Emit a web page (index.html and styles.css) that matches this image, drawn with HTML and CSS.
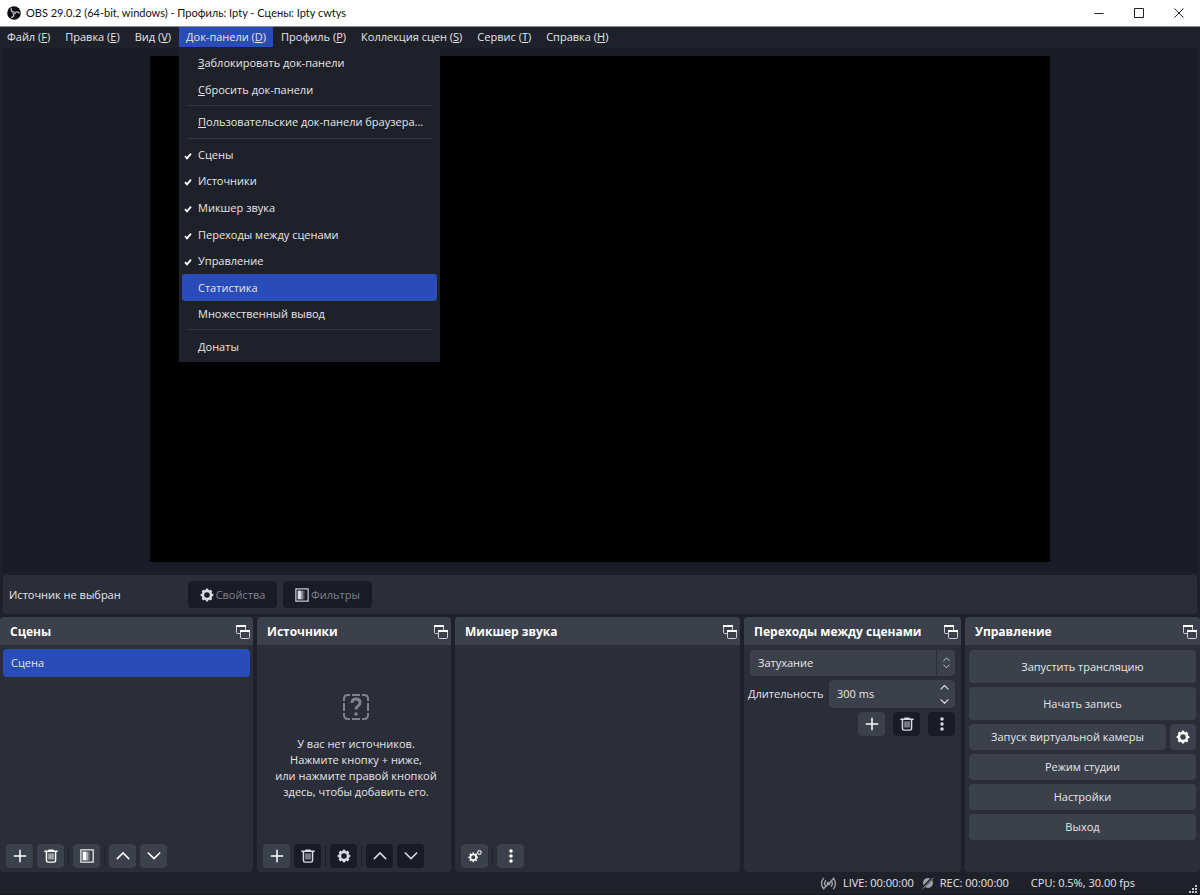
FILE: index.html
```html
<!DOCTYPE html>
<html lang="ru">
<head>
  <meta charset="UTF-8">
  <meta name="viewport" content="width=device-width, initial-scale=1.0">
  <title>OBS 29.0.2</title>
  <link rel="stylesheet" href="styles.css">
</head>
<body>

  <!-- icons -->
  <svg class="sprite" aria-hidden="true">
    <symbol id="i-plus" viewBox="0 0 16 16"><path d="M8 1.500v13M1.500 8h13" fill="none" stroke="currentColor" stroke-width="1.7" stroke-linecap="round"/></symbol>
    <symbol id="i-trash" viewBox="0 0 16 16">
      <path d="M1 2.500h14M5.500 1.300h5M2.800 3V13q0 2 2 2h6.400q2 0 2-2V3" fill="none" stroke="currentColor" stroke-width="1.700" stroke-linecap="round"/>
      <path d="M5.800 5v7M8 5v7M10.200 5v7" stroke="currentColor" stroke-width="1.100"/>
    </symbol>
    <symbol id="i-filter" viewBox="0 0 16 16">
      <rect x="1" y="1" width="14" height="14" fill="none" stroke="currentColor" stroke-width="1.3"/>
      <path d="M3 3h4v10H3z" fill="currentColor"/>
      <path d="M7 3h2v10H7z" fill="currentColor" opacity=".65"/>
      <path d="M9 3h2v10H9z" fill="currentColor" opacity=".3"/>
    </symbol>
    <symbol id="i-up" viewBox="0 0 16 16"><path d="M1.500 11L8 4.500l6.500 6.500" fill="none" stroke="currentColor" stroke-width="1.8" stroke-linecap="round"/></symbol>
    <symbol id="i-down" viewBox="0 0 16 16"><path d="M1.500 4.500L8 11l6.500-6.500" fill="none" stroke="currentColor" stroke-width="1.8" stroke-linecap="round"/></symbol>
    <symbol id="i-gear" viewBox="0 0 16 16">
      <circle cx="8" cy="8" r="4.7" fill="none" stroke="currentColor" stroke-width="3"/>
      <circle cx="8" cy="8" r="6" fill="none" stroke="currentColor" stroke-width="2.6" pathLength="16" stroke-dasharray="1.1 .9" stroke-dashoffset=".55"/>
    </symbol>
    <symbol id="i-gears" viewBox="0 0 16 16">
      <circle cx="6" cy="9.5" r="3.3" fill="none" stroke="currentColor" stroke-width="1.9"/>
      <circle cx="6" cy="9.5" r="4.6" fill="none" stroke="currentColor" stroke-width="1.8" pathLength="16" stroke-dasharray="1 1" stroke-dashoffset=".5"/>
      <circle cx="13" cy="4" r="1.9" fill="none" stroke="currentColor" stroke-width="1.1"/>
      <circle cx="13" cy="4" r="2.6" fill="none" stroke="currentColor" stroke-width="1" pathLength="16" stroke-dasharray="1 1" stroke-dashoffset=".5"/>
    </symbol>
    <symbol id="i-dots" viewBox="0 0 16 16"><path d="M8 2.2h.01M8 8h.01M8 13.8h.01" stroke="currentColor" stroke-width="4" stroke-linecap="round"/></symbol>
    <symbol id="i-float" viewBox="0 0 14 14">
      <path d="M4 8.500H1.500Q.5 8.500.5 7.500V1h9v4" fill="none" stroke="currentColor" opacity=".75"/>
      <path d="M0 0h10v2H0zM4 5h10v2H4z" fill="currentColor"/>
      <path d="M4.500 6h9v6.500q0 1-1 1h-7q-1 0-1-1z" fill="none" stroke="currentColor" opacity=".75"/>
    </symbol>
    <symbol id="i-check" viewBox="0 0 8 8"><path d="M1 4.200L3 6.300 7 1.700" fill="none" stroke="currentColor" stroke-width="1.8"/></symbol>
  </svg>

  <header class="titlebar">
    <svg class="logo" viewBox="0 0 16 16" aria-hidden="true">
      <circle cx="8" cy="8" r="7.800" fill="#0b0b0d"/>
      <g fill="none" stroke="#b9b9bc" stroke-width="1.600" stroke-linecap="round">
        <path id="blade" d="M5 3C4.200 5.500 5.800 7.300 8.200 6.800"/>
        <use href="#blade" transform="rotate(120 8 8)"/>
        <use href="#blade" transform="rotate(240 8 8)"/>
      </g>
    </svg>
    <h1 class="window-title">OBS 29.0.2 (64-bit, windows) - Профиль: Ipty - Сцены: Ipty cwtys</h1>
    <div class="window-buttons">
      <button aria-label="Свернуть"><svg viewBox="0 0 10 10"><path d="M.5 5.500h9"/></svg></button>
      <button aria-label="Развернуть"><svg viewBox="0 0 10 10"><path d="M.5.5h9v9h-9z"/></svg></button>
      <button aria-label="Закрыть"><svg viewBox="0 0 10 10"><path d="M.5.5l9 9M9.500.5l-9 9"/></svg></button>
    </div>
  </header>

  <nav>
    <ul class="menubar">
      <li><button>Файл (<u>F</u>)</button></li>
      <li><button>Правка (<u>E</u>)</button></li>
      <li><button>Вид (<u>V</u>)</button></li>
      <li class="open">
        <button>Док-панели (<u>D</u>)</button>
        <div class="dropdown" role="menu">
          <button role="menuitem"><span><u>З</u>аблокировать док-панели</span></button>
          <button role="menuitem"><span><u>С</u>бросить док-панели</span></button>
          <hr>
          <button role="menuitem"><span><u>П</u>ользовательские док-панели браузера...</span></button>
          <hr>
          <button role="menuitemcheckbox" aria-checked="true"><svg><use href="#i-check"/></svg>Сцены</button>
          <button role="menuitemcheckbox" aria-checked="true"><svg><use href="#i-check"/></svg>Источники</button>
          <button role="menuitemcheckbox" aria-checked="true"><svg><use href="#i-check"/></svg>Микшер звука</button>
          <button role="menuitemcheckbox" aria-checked="true"><svg><use href="#i-check"/></svg>Переходы между сценами</button>
          <button role="menuitemcheckbox" aria-checked="true"><svg><use href="#i-check"/></svg>Управление</button>
          <button role="menuitemcheckbox" aria-checked="false" class="active">Статистика</button>
          <button role="menuitem">Множественный вывод</button>
          <hr>
          <button role="menuitem">Донаты</button>
        </div>
      </li>
      <li><button>Профиль (<u>P</u>)</button></li>
      <li><button>Коллекция сцен (<u>S</u>)</button></li>
      <li><button>Сервис (<u>T</u>)</button></li>
      <li><button>Справка (<u>H</u>)</button></li>
    </ul>
  </nav>

  <main class="preview">
    <div class="canvas"></div>
  </main>

  <section class="context-bar">
    <span class="context-label">Источник не выбран</span>
    <button class="btn off" disabled><svg class="icon"><use href="#i-gear"/></svg>Свойства</button>
    <button class="btn off" disabled><svg class="icon"><use href="#i-filter"/></svg>Фильтры</button>
  </section>

  <div class="docks">
    <section class="dock">
      <header class="dock-title"><h2>Сцены</h2><button aria-label="Открепить"><svg class="icon"><use href="#i-float"/></svg></button></header>
      <ul class="scene-list">
        <li><button>Сцена</button></li>
      </ul>
      <div class="toolbar">
        <button class="tool" aria-label="Добавить"><svg class="icon"><use href="#i-plus"/></svg></button>
        <button class="tool" aria-label="Удалить"><svg class="icon"><use href="#i-trash"/></svg></button>
        <i class="sep"></i>
        <button class="tool" aria-label="Фильтры"><svg class="icon"><use href="#i-filter"/></svg></button>
        <i class="sep"></i>
        <button class="tool" aria-label="Вверх"><svg class="icon"><use href="#i-up"/></svg></button>
        <button class="tool" aria-label="Вниз"><svg class="icon"><use href="#i-down"/></svg></button>
      </div>
    </section>

    <section class="dock">
      <header class="dock-title"><h2>Источники</h2><button aria-label="Открепить"><svg class="icon"><use href="#i-float"/></svg></button></header>
      <div class="empty">
        <svg class="empty-icon" viewBox="0 0 26 26" fill="none" stroke="currentColor" stroke-width="2" aria-hidden="true">
          <path d="M1 7V5q0-4 4-4h2M19 1h2q4 0 4 4v2M25 19v2q0 4-4 4h-2M7 25H5q-4 0-4-4v-2M9 1h8M9 25h8M1 9v8M25 9v8"/>
          <path d="M9 9q0-4 4-4t4 3.500q0 2-2 3.500t-2 3.500" stroke-width="3"/>
          <circle cx="13" cy="20" r="1.800" fill="currentColor" stroke="none"/>
        </svg>
        <p>У вас нет источников.<br>Нажмите кнопку + ниже,<br>или нажмите правой кнопкой<br>здесь, чтобы добавить его.</p>
      </div>
      <div class="toolbar">
        <button class="tool" aria-label="Добавить"><svg class="icon"><use href="#i-plus"/></svg></button>
        <button class="tool off" aria-label="Удалить" disabled><svg class="icon"><use href="#i-trash"/></svg></button>
        <i class="sep"></i>
        <button class="tool off" aria-label="Свойства" disabled><svg class="icon"><use href="#i-gear"/></svg></button>
        <i class="sep"></i>
        <button class="tool off" aria-label="Вверх" disabled><svg class="icon"><use href="#i-up"/></svg></button>
        <button class="tool off" aria-label="Вниз" disabled><svg class="icon"><use href="#i-down"/></svg></button>
      </div>
    </section>

    <section class="dock">
      <header class="dock-title"><h2>Микшер звука</h2><button aria-label="Открепить"><svg class="icon"><use href="#i-float"/></svg></button></header>
      <div class="toolbar">
        <button class="tool" aria-label="Расширенные свойства звука"><svg class="icon"><use href="#i-gears"/></svg></button>
        <i class="sep"></i>
        <button class="tool" aria-label="Меню микшера"><svg class="icon"><use href="#i-dots"/></svg></button>
      </div>
    </section>

    <section class="dock">
      <header class="dock-title"><h2>Переходы между сценами</h2><button aria-label="Открепить"><svg class="icon"><use href="#i-float"/></svg></button></header>
      <div class="transitions">
        <div class="select-wrap">
          <select aria-label="Переход"><option>Затухание</option></select>
          <span class="select-arrows"><svg><use href="#i-up"/></svg><svg><use href="#i-down"/></svg></span>
        </div>
        <div class="duration">
          <label for="duration">Длительность</label>
          <div class="spin">
            <input id="duration" type="text" value="300 ms">
            <div class="spin-buttons">
              <button aria-label="Больше"><svg><use href="#i-up"/></svg></button>
              <button aria-label="Меньше"><svg><use href="#i-down"/></svg></button>
            </div>
          </div>
        </div>
        <div class="transition-tools">
          <button class="tool" aria-label="Добавить"><svg class="icon"><use href="#i-plus"/></svg></button>
          <button class="tool off" aria-label="Удалить" disabled><svg class="icon"><use href="#i-trash"/></svg></button>
          <button class="tool off" aria-label="Свойства перехода" disabled><svg class="icon"><use href="#i-dots"/></svg></button>
        </div>
      </div>
    </section>

    <section class="dock">
      <header class="dock-title"><h2>Управление</h2><button aria-label="Открепить"><svg class="icon"><use href="#i-float"/></svg></button></header>
      <div class="controls">
        <button class="btn tall">Запустить трансляцию</button>
        <button class="btn tall">Начать запись</button>
        <div class="controls-row">
          <button class="btn">Запуск виртуальной камеры</button>
          <button class="btn gear" aria-label="Настройки виртуальной камеры"><svg class="icon"><use href="#i-gear"/></svg></button>
        </div>
        <button class="btn">Режим студии</button>
        <button class="btn">Настройки</button>
        <button class="btn">Выход</button>
      </div>
    </section>
  </div>

  <footer class="statusbar">
    <span class="status">
      <svg class="live" viewBox="0 0 18 14" fill="none" stroke="currentColor" stroke-width="1.500" aria-hidden="true">
        <path d="M4 1Q-1 7 4 13M6.300 3.500Q3.500 7 6.300 10.500M14 1q5 6 0 12M11.700 3.500q2.800 3.500 0 7M3.500 13L15 1"/>
        <circle cx="9" cy="7" r="2" fill="currentColor" stroke="none"/>
      </svg>
      LIVE: 00:00:00
    </span>
    <span class="status">
      <svg class="rec" viewBox="0 0 12 12" aria-hidden="true">
        <circle cx="6" cy="6" r="5" fill="currentColor"/>
        <path d="M0 11.500L11.500 0" stroke="#1f212a" stroke-width="2.600"/>
        <path d="M.8 11.500L11.500.8" stroke="currentColor" stroke-width="1"/>
      </svg>
      REC: 00:00:00
    </span>
    <span class="status cpu">CPU: 0.5%, 30.00 fps</span>
    <svg class="grip" viewBox="0 0 9 9" aria-hidden="true"><path d="M6 0h2v2H6zM3 3h2v2H3zM6 3h2v2H6zM0 6h2v2H0zM3 6h2v2H3zM6 6h2v2H6z" fill="currentColor"/></svg>
  </footer>

</body>
</html>
```
FILE: styles.css
```css
* {
  box-sizing: border-box;
}

body {
  margin: 0;
  height: 100vh;
  display: flex;
  flex-direction: column;
  background: #1f212a;
  color: #e6e6e8;
  font: 11px/16px "Open Sans", "Noto Sans", sans-serif;
}

h1, h2, p, ul {
  margin: 0;
  padding: 0;
}

ul {
  list-style: none;
}

button, select, input {
  font: inherit;
  color: inherit;
  border: 0;
  margin: 0;
  padding: 0;
  background: none;
}

u {
  text-underline-offset: 1px;
}

.sprite {
  display: none;
}

.icon {
  width: 14px;
  height: 14px;
  flex: none;
}

/* window frame */

.titlebar {
  display: flex;
  align-items: center;
  height: 27px;
  padding: 0 1px 0 7px;
  background: #fff;
  color: #111;
  border-bottom: 1px solid #8b8c8f;
}

.logo {
  width: 14px;
  height: 14px;
  margin-right: 5px;
}

.window-title {
  flex: 1;
  font: 400 11px/16px Lato, sans-serif;
}

.window-buttons {
  display: flex;
}

.window-buttons button {
  display: flex;
  justify-content: center;
  align-items: center;
  width: 40px;
  height: 26px;
}

.window-buttons svg {
  width: 10px;
  height: 10px;
  fill: none;
  stroke: #222;
}

/* menu */

.menubar {
  display: flex;
  gap: 1px;
  height: 21px;
}

.menubar > li {
  position: relative;
}

.menubar > li > button {
  height: 20px;
  padding: 0 7px;
}

.open > button {
  background: #284cb8;
}

.dropdown {
  position: absolute;
  z-index: 10;
  top: 21px;
  left: 0;
  display: flex;
  flex-direction: column;
  min-width: 261px;
  min-height: 314px;
  padding: 2px 3px;
  background: #1f212a;
  white-space: nowrap;
}

.dropdown button {
  flex: 1;
  display: flex;
  align-items: center;
  padding: 0 8px 0 16px;
  border-radius: 3px;
}

.dropdown svg {
  width: 8px;
  height: 8px;
  margin: 2px 6px 0 -14px;
  color: #fff;
}

.dropdown .active {
  background: #284cb8;
}

.dropdown hr {
  height: 1px;
  margin: 2px 5px 3px;
  border: 0;
  background: #343743;
}

/* preview */

.preview {
  flex: 1;
  min-height: 0;
  display: flex;
  justify-content: center;
  margin: 0 3px;
  padding: 8px 0 10px;
  background: #191b26;
}

.canvas {
  height: 100%;
  aspect-ratio: 16 / 9;
  background: #000;
}

.context-bar {
  display: flex;
  align-items: center;
  gap: 6px;
  margin: 3px;
  padding: 6px;
  border-radius: 4px;
  background: #2b2d38;
}

.context-label {
  width: 173px;
}

.btn {
  display: flex;
  align-items: center;
  justify-content: center;
  gap: 2px;
  height: 26px;
  border-radius: 4px;
  background: #3c404b;
}

.context-bar .btn {
  width: 89px;
  height: 27px;
}

.btn.off {
  background: #191b26;
  color: #808289;
}

.btn.off .icon {
  color: #d8dae4;
}

/* docks */

.docks {
  display: grid;
  grid-template-columns: 253fr 194fr 285fr 217fr 235fr;
  gap: 4px;
  min-height: 255px;
}

.dock {
  display: flex;
  flex-direction: column;
  min-width: 0;
  border-radius: 4px;
  background: #2b2d38;
}

.dock-title {
  display: flex;
  align-items: center;
  justify-content: space-between;
  height: 28px;
  padding: 1px 3px 0 10px;
  border-radius: 4px 4px 0 0;
  background: #3c404b;
  color: #fff;
}

.dock-title h2 {
  font-size: 12px;
  font-weight: 700;
  white-space: nowrap;
}

.dock-title button {
  display: flex;
}

.scene-list {
  padding: 4px 3px;
}

.scene-list button {
  width: 100%;
  height: 28px;
  padding: 0 8px;
  border-radius: 4px;
  background: #284cb8;
  text-align: left;
}

.toolbar {
  display: flex;
  gap: 4px;
  margin-top: auto;
  padding: 4px 6px;
}

.tool {
  display: flex;
  align-items: center;
  justify-content: center;
  width: 27px;
  height: 24px;
  border-radius: 4px;
  background: #3c404b;
  color: #fff;
}

.tool.off {
  background: #191b26;
  color: #d8dae4;
}

.sep {
  width: 1px;
  margin: 2px 0;
  background: #1f212a;
}

.empty {
  flex: 1;
  display: flex;
  flex-direction: column;
  align-items: center;
  justify-content: center;
  gap: 16px;
  padding: 8px 0 0 4px;
  text-align: center;
  white-space: nowrap;
}

.empty-icon {
  width: 26px;
  height: 26px;
  color: #808289;
}

.transitions {
  display: flex;
  flex-direction: column;
  gap: 4px;
  padding: 5px 6px 0 4px;
}

.select-wrap {
  display: flex;
  margin-left: 2px;
  border-radius: 4px;
  background: #3c404b;
}

.select-wrap select {
  flex: 1;
  height: 26px;
  padding: 0 8px;
  appearance: none;
  border-right: 1px solid #2b2d38;
}

.select-arrows {
  display: flex;
  flex-direction: column;
  align-items: center;
  justify-content: center;
  width: 18px;
}

.select-arrows svg {
  width: 7px;
  height: 7px;
}

.duration {
  display: flex;
  align-items: center;
  justify-content: space-between;
  gap: 4px;
}

.spin {
  display: flex;
  width: 126px;
  height: 28px;
  border-radius: 4px;
  background: #3c404b;
}

.spin input {
  flex: 1;
  min-width: 0;
  padding: 0 8px;
}

.spin-buttons {
  display: flex;
  flex-direction: column;
  width: 22px;
}

.spin-buttons button {
  flex: 1;
  display: flex;
  align-items: center;
  justify-content: center;
}

.spin-buttons svg {
  width: 9px;
  height: 9px;
}

.transition-tools {
  display: flex;
  justify-content: flex-end;
  gap: 8px;
}

.controls {
  display: flex;
  flex-direction: column;
  gap: 4px;
  padding: 5px 4px;
}

.controls .tall {
  height: 33px;
}

.controls-row {
  display: flex;
  gap: 4px;
}

.controls-row .btn {
  flex: 1;
}

.controls-row .gear {
  flex: none;
  width: 26px;
  color: #fff;
}

/* status bar */

.statusbar {
  display: flex;
  align-items: center;
  justify-content: flex-end;
  gap: 8px;
  height: 23px;
  padding-right: 2px;
  border-bottom: 1px solid #14161b;
}

.status {
  display: flex;
  align-items: center;
  gap: 6px;
}

.status svg {
  color: #a0a1a5;
}

.live {
  width: 17px;
  height: 13px;
}

.rec {
  width: 12px;
  height: 12px;
}

.cpu {
  margin: 0 46px 0 14px;
}

.grip {
  width: 9px;
  height: 9px;
  align-self: flex-end;
  color: #c4c5c8;
}
```
